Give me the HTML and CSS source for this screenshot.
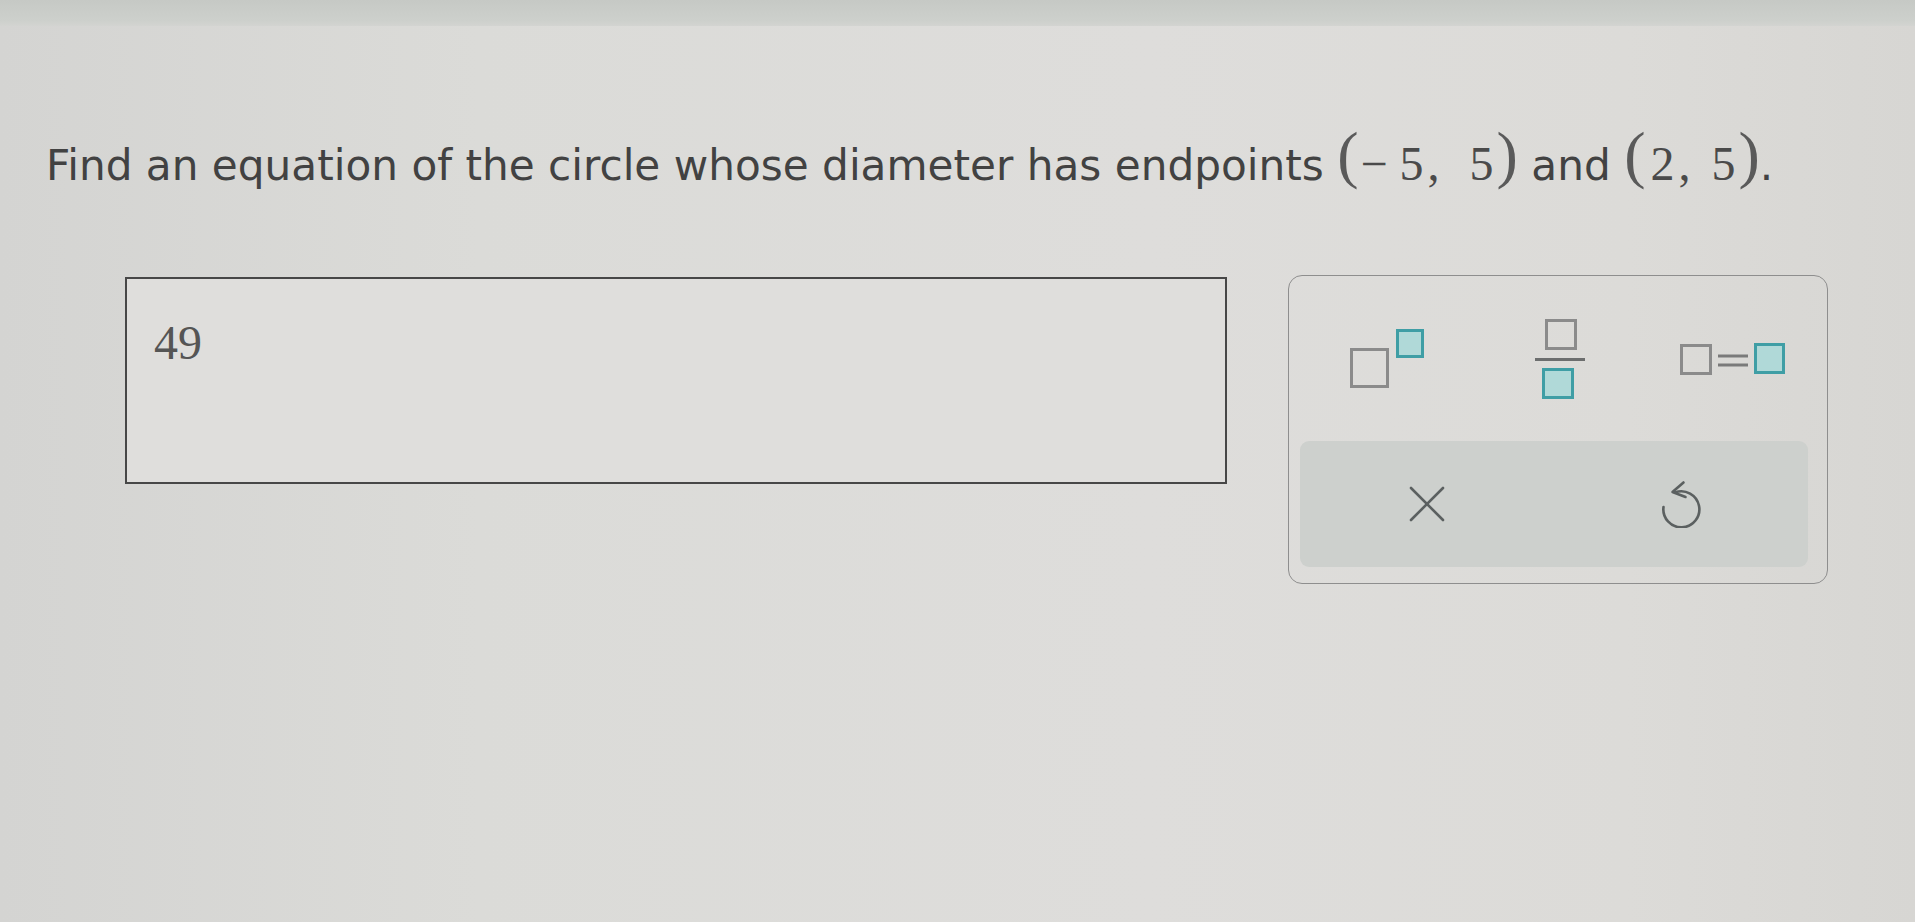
FILE: index.html
```html
<!DOCTYPE html>
<html lang="en">
<head>
<meta charset="utf-8">
<title>Circle equation</title>
<link rel="stylesheet" href="styles.css">
</head>
<body>
<div class="topbar"></div>
<p class="question">Find an equation of the circle whose diameter has endpoints <span class="math m1"><span class="paren lp">(</span><span class="op">−</span><span class="num">5</span><span class="comma">,</span><span class="num">5</span><span class="paren rp">)</span></span> and <span class="math m2"><span class="paren lp">(</span><span class="num first">2</span><span class="comma">,</span><span class="num">5</span><span class="paren rp">)</span></span>.</p>
<div class="answer-row">
  <div class="answer-box"><span class="answer">49</span></div>
  <div class="palette">
    <div class="palette-top">
      <div class="tool">
        <svg width="74" height="60" viewBox="0 0 74 60">
          <rect x="1.5" y="20.5" width="36" height="37" class="sq-gray"/>
          <rect x="47.5" y="1.5" width="25" height="26" class="sq-teal"/>
        </svg>
      </div>
      <div class="tool">
        <svg width="50" height="80" viewBox="0 0 50 80">
          <rect x="11.5" y="1.5" width="29" height="28" class="sq-gray"/>
          <rect x="0" y="39" width="50" height="3" class="bar"/>
          <rect x="8.5" y="50.5" width="29" height="28" class="sq-teal"/>
        </svg>
      </div>
      <div class="tool">
        <svg width="106" height="32" viewBox="0 0 106 32">
          <rect x="1.5" y="2.5" width="29" height="28" class="sq-gray"/>
          <line x1="38" y1="13" x2="68" y2="13" class="eq"/>
          <line x1="38" y1="22" x2="68" y2="22" class="eq"/>
          <rect x="75.5" y="1.5" width="28" height="28" class="sq-teal"/>
        </svg>
      </div>
    </div>
    <div class="palette-actions">
      <div class="tool">
        <svg width="36" height="36" viewBox="0 0 36 36">
          <line x1="2" y1="2" x2="34" y2="34" class="act"/>
          <line x1="34" y1="2" x2="2" y2="34" class="act"/>
        </svg>
      </div>
      <div class="tool">
        <svg width="40" height="48" viewBox="0 0 40 48">
          <path d="M14 12.5 A18 18 0 1 1 2.5 27" class="act"/>
          <path d="M22.5 2.5 L11.5 12 L24.5 17" class="act"/>
        </svg>
      </div>
    </div>
  </div>
</div>
</body>
</html>
```

FILE: styles.css
```css
html, body {
  margin: 0;
  padding: 0;
}

body {
  width: 1915px;
  height: 922px;
  overflow: hidden;
  background: linear-gradient(90deg, #d4d4d2 0%, #dbdbd8 25%, #dedddb 60%, #dcdbd8 85%, #d7d6d3 100%);
  font-family: "DejaVu Sans", Verdana, sans-serif;
  color: #424242;
}

.topbar {
  height: 26px;
  background: linear-gradient(180deg, #c6c9c5 0%, #cdd0cc 80%, #d3d4d1 100%);
}

.question {
  margin: 110px 0 0 46px;
  font-size: 42.2px;
  line-height: 60px;
  white-space: nowrap;
  color: #424242;
}

.math {
  font-family: "Liberation Serif", "Times New Roman", serif;
  font-size: 48px;
  line-height: 0;
  color: #4a4a4a;
}

.paren {
  font-size: 64px;
  color: #5a5a5a;
  vertical-align: 4px;
}

.rp {
  margin-left: 3px;
}

.op {
  margin: 0 12px 0 2px;
}

.first {
  margin-left: 5px;
}

.comma {
  margin: 0 30px 0 4px;
}

.m2 .comma {
  margin-right: 21px;
}

.answer-row {
  display: flex;
  align-items: flex-start;
  margin-top: 79px;
  padding-left: 125px;
}

.answer-box {
  box-sizing: border-box;
  width: 1102px;
  height: 207px;
  margin-top: 2px;
  border: 2px solid #474747;
  background: #dfdedc;
  padding: 36px 27px;
}

.answer {
  font-family: "Liberation Serif", "Times New Roman", serif;
  font-size: 48px;
  line-height: 55px;
  color: #555555;
}

.palette {
  box-sizing: border-box;
  margin-left: 61px;
  width: 540px;
  height: 309px;
  border: 1.5px solid #8e8e8e;
  border-radius: 14px;
  padding: 0 6.5px 15px 11px;
  display: flex;
  flex-direction: column;
}

.palette-top {
  display: grid;
  grid-template-columns: repeat(3, 173px);
  height: 165px;
  align-items: center;
  justify-items: center;
}

.palette-actions {
  width: 508px;
  height: 126px;
  background: #cdd0cd;
  border-radius: 9px;
  display: grid;
  grid-template-columns: 1fr 1fr;
  align-items: center;
  justify-items: center;
}

.tool {
  display: flex;
  align-items: center;
  justify-content: center;
}

.tool svg {
  display: block;
}

.sq-gray {
  fill: none;
  stroke: #8b8b8b;
  stroke-width: 3;
}

.sq-teal {
  fill: #b0d9d8;
  stroke: #3f9ea5;
  stroke-width: 3;
}

.bar {
  fill: #6c6e6e;
}

.eq {
  stroke: #7a7a7a;
  stroke-width: 3;
}

.act {
  fill: none;
  stroke: #5b6060;
  stroke-width: 2.6;
  stroke-linecap: round;
  stroke-linejoin: round;
}
```
